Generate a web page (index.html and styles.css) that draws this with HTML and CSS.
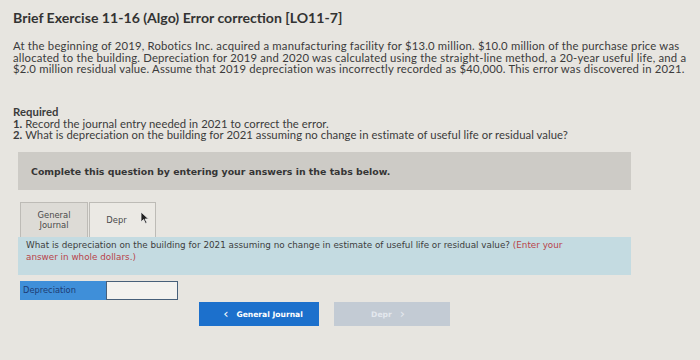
FILE: index.html
```html
<!DOCTYPE html>
<html>
<head>
<meta charset="utf-8">
<link rel="stylesheet" href="styles.css">
</head>
<body>
<div class="page">
  <h1 class="title">Brief Exercise 11-16 (Algo) Error correction [LO11-7]</h1>
  <p class="intro">At the beginning of 2019, Robotics Inc. acquired a manufacturing facility for $13.0 million. $10.0 million of the purchase price was allocated to the building. Depreciation for 2019 and 2020 was calculated using the straight-line method, a 20-year useful life, and a $2.0 million residual value. Assume that 2019 depreciation was incorrectly recorded as $40,000. This error was discovered in 2021.</p>
  <div class="required">
    <div class="req-head">Required</div>
    <div><b>1.</b> Record the journal entry needed in 2021 to correct the error.</div>
    <div><b>2.</b> What is depreciation on the building for 2021 assuming no change in estimate of useful life or residual value?</div>
  </div>
  <div class="panel">
    <div class="instructions">Complete this question by entering your answers in the tabs below.</div>
    <div class="tabs">
      <div class="tab">General<br>Journal</div>
      <div class="tab active">Depr
        <svg class="cursor" width="9" height="13" viewBox="0 0 9 13"><path d="M1 1 L1 11 L3.5 8.5 L5.5 12.5 L7 11.8 L5 8 L8.5 8 Z" fill="#222" stroke="#eee" stroke-width="0.8"/></svg>
      </div>
    </div>
    <div class="question">What is depreciation on the building for 2021 assuming no change in estimate of useful life or residual value? <span class="hint">(Enter your answer in whole dollars.)</span></div>
    <div class="answer-row">
      <div class="answer-label">Depreciation</div>
      <div class="answer-input"></div>
    </div>
    <div class="nav">
      <div class="btn prev"><span class="chev">&lsaquo;</span> General Journal</div>
      <div class="btn next">Depr <span class="chev">&rsaquo;</span></div>
    </div>
  </div>
</div>
</body>
</html>
```
FILE: styles.css
```css
html, body {
  margin: 0;
  padding: 0;
  background: #e7e5e0;
}
.page {
  width: 700px;
  height: 360px;
  box-sizing: border-box;
  padding: 10px 11px 0 13px;
  color: #3b3b3b;
  font-family: Lato, "Liberation Sans", sans-serif;
  overflow: hidden;
}
.title {
  margin: 0;
  font-size: 14.1px;
  line-height: 16px;
  font-weight: 700;
  color: #333;
}
.intro {
  margin: 14px 0 0 0;
  font-size: 11.3px;
  line-height: 11.7px;
  letter-spacing: 0.2px;
}
.required {
  margin-top: 31px;
  font-size: 11.3px;
  line-height: 11.4px;
  letter-spacing: 0.05px;
}
.req-head {
  font-weight: 700;
}
.panel {
  margin: 12px 0 0 5px;
  width: 613px;
  font-family: "DejaVu Sans", Verdana, sans-serif;
}
.instructions {
  height: 38px;
  box-sizing: border-box;
  padding: 14px 0 0 13px;
  background: #cdcbc6;
  font-size: 9.4px;
  font-weight: 700;
  color: #353535;
}
.tabs {
  display: flex;
  margin: 12px 0 0 2px;
}
.tab {
  position: relative;
  width: 68px;
  height: 35px;
  box-sizing: border-box;
  border: 1px solid #bdbbb6;
  border-bottom: none;
  background: #dddbd6;
  font-size: 8.4px;
  line-height: 10.5px;
  color: #4a4a4a;
  display: flex;
  align-items: center;
  justify-content: center;
  text-align: center;
}
.tab.active {
  width: 67px;
  margin-left: 1px;
  background: #ebe9e4;
  padding-right: 12px;
}
.cursor {
  position: absolute;
  left: 50px;
  top: 8px;
}
.question {
  height: 38px;
  box-sizing: border-box;
  padding: 2px 50px 0 8px;
  background: #c4dbe1;
  font-size: 8.8px;
  line-height: 12px;
  color: #3d3d3d;
}
.hint {
  color: #b8434a;
}
.answer-row {
  display: flex;
  margin: 6px 0 0 2px;
  height: 19px;
}
.answer-label {
  width: 86px;
  background: #3f8fd9;
  color: #1e3d74;
  font-size: 8.3px;
  line-height: 19px;
  padding-left: 3px;
  box-sizing: border-box;
}
.answer-input {
  width: 72px;
  background: #f3f2ef;
  border: 1.5px solid #47607a;
  box-sizing: border-box;
}
.nav {
  display: flex;
  justify-content: center;
  gap: 15px;
  margin-top: 2px;
}
.btn {
  height: 24px;
  display: flex;
  align-items: center;
  justify-content: center;
  font-size: 7.6px;
  font-weight: 700;
}
.btn.prev {
  width: 120px;
  background: #1c70cc;
  color: #fff;
}
.btn.next {
  width: 116px;
  background: #c3cbd4;
  color: #e3e8ee;
}
.chev {
  font-size: 13px;
  font-weight: 400;
  margin: 0 8px;
  line-height: 10px;
}
```
